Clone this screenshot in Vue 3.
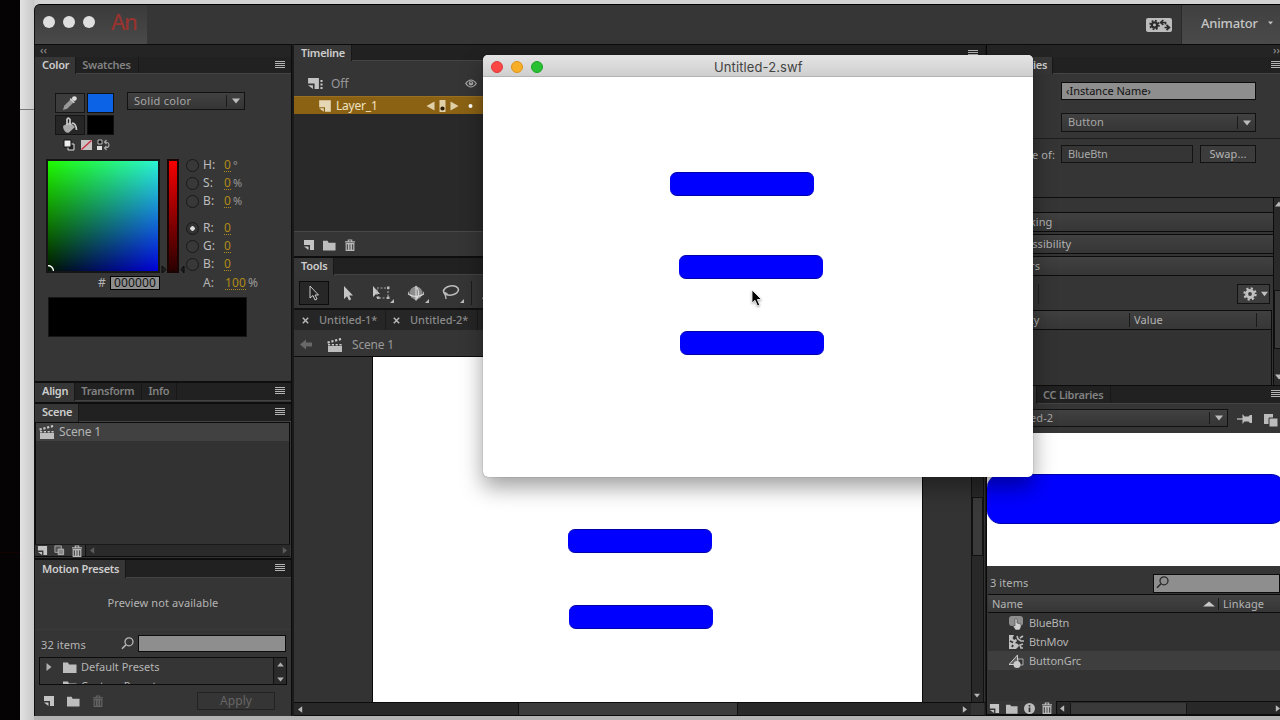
<template>
  <div class="desktop">
    <svg class="defs" width="0" height="0">
      <symbol id="burger" viewBox="0 0 10 8"><path d="M0 .5h10M0 2.5h10M0 4.5h10M0 6.5h10" stroke="#b4b4b4" stroke-width="1" /></symbol>
      <symbol id="page" viewBox="0 0 12 12"><path d="M1 1h10v10H7V6H1z" fill="#c4c4c4" /><path d="M1 7.5h4.5V11z" fill="#c4c4c4" /></symbol>
      <symbol id="folder" viewBox="0 0 14 12"><path d="M0 1.5h5l1 2h7.5V12H0z" fill="#bdbdbd" /></symbol>
      <symbol id="trash" viewBox="0 0 12 12"><path d="M1 2.8h10M4.3 2.5V1h3.4v1.5M2.2 4.6h7.6v6.7H2.2zM4.4 5v6M6 5v6M7.6 5v6" fill="none" stroke="#b8b8b8" stroke-width="1.2" /></symbol>
      <symbol id="copy" viewBox="0 0 12 12"><path d="M1 1h7v7H1z" fill="#555" stroke="#aaa" /><path d="M4.5 4.5h6v6h-6z" fill="#8a8a8a" stroke="#bbb" /></symbol>
      <symbol id="clap" viewBox="0 0 16 14"><path d="M1 8h14v6H1z" fill="#bdbdbd" /><path d="M1 6.8h14" stroke="#c8c8c8" stroke-width="1.6" stroke-dasharray="2.2 1.6" /><path d="M.6 4.6L14 1" stroke="#c8c8c8" stroke-width="2.2" stroke-dasharray="2.2 1.7" /></symbol>
      <symbol id="glass" viewBox="0 0 13 13"><circle cx="8" cy="4.8" r="4" fill="none" stroke="currentColor" stroke-width="1.3" /><path d="M5 7.8L1 11.8" stroke="currentColor" stroke-width="1.6" /></symbol>
      <symbol id="left" viewBox="0 0 6 8"><path d="M5 0v8L0 4z" fill="currentColor" /></symbol>
      <symbol id="right" viewBox="0 0 6 8"><path d="M1 0v8l5-4z" fill="currentColor" /></symbol>
      <symbol id="down" viewBox="0 0 8 6"><path d="M0 .5h8L4 5.5z" fill="currentColor" /></symbol>
      <symbol id="up" viewBox="0 0 8 6"><path d="M0 5.5h8L4 .5z" fill="currentColor" /></symbol>
      <symbol id="gear" viewBox="0 0 14 14"><circle cx="7" cy="7" r="3.4" fill="none" stroke="currentColor" stroke-width="3" /><circle cx="7" cy="7" r="5.6" fill="none" stroke="currentColor" stroke-width="2.2" stroke-dasharray="2.2 2.2" /></symbol>
    </svg>

    <div class="app">
      <header class="top">
        <div class="brand">
          <i v-for="n in 3" :key="n" class="light"></i>
          <span class="logo">An</span>
        </div>
        <svg class="sync" width="26" height="14" viewBox="0 0 26 14">
          <rect width="26" height="14" rx="2" fill="#bcbcbc" />
          <g color="#2c2c2c"><use href="#gear" x="3" y="1.5" width="11" height="11" /></g>
          <path d="M15 4.5h4.5v2M17.3 2L14.6 4.5l2.7 2.4M23 9.5h-4.5M20.5 7l2.900 2.500-2.900 2.500" fill="none" stroke="#2c2c2c" stroke-width="1.7" />
        </svg>
        <div class="workspace">
          <span>Animator</span>
          <svg width="6" height="4" color="#c0c0c0"><use href="#down" width="5" height="4" /></svg>
        </div>
      </header>

      <main class="body">
        <section class="left">
          <div class="strip">‹‹</div>
          <div class="tabs">
            <b class="tab on">Color</b><b class="tab">Swatches</b>
            <svg class="burger" width="10" height="8"><use href="#burger" /></svg>
          </div>
          <div class="color">
            <div class="fills">
              <div class="swatches">
                <div class="tool-btn">
                  <svg width="18" height="18" viewBox="0 0 18 18"><path d="M2 16l1.2-4.2L10 5l3 3-6.8 6.800z" fill="#999" /><path d="M9.2 4.6l4.2 4.200" stroke="#ccc" stroke-width="1.5" /><circle cx="13.4" cy="4.600" r="2.400" fill="#ddd" /></svg>
                </div>
                <div class="swatch blue"></div>
                <div class="tool-btn dark">
                  <svg width="18" height="18" viewBox="0 0 18 18"><path d="M2 10l7-4 5 5-6 5.5q-2 1-4-1t-2-5.500z" fill="#aaa" /><path d="M6 9V3.5q1-2.800 3 0V9M11 7q4 0 4.500 7" fill="none" stroke="#ccc" stroke-width="1.7" /></svg>
                </div>
                <div class="swatch"></div>
              </div>
              <svg class="minis" width="50" height="12" viewBox="0 0 50 12">
                <path d="M5 5h6v6H5z" fill="#222" stroke="#e0e0e0" /><path d="M1 1h7v7H1z" fill="#eee" stroke="#111" />
                <path d="M18 1h11v10H18z" fill="#c9c4c4" /><path d="M18.5 10.500l10-9" stroke="#c83040" stroke-width="1.5" />
                <path d="M35 1h4v4h-4z" fill="#111" stroke="#bbb" /><path d="M34 7h5v4h-5z" fill="#e0e0e0" />
                <path d="M41.5 3q4.500 0 4.500 3t-4.500 3M43.500 1l-2 2 2 2M43.500 7l-2 2 2 2" fill="none" stroke="#aaa" stroke-width="1.2" />
              </svg>
            </div>
            <div class="select type"><span>Solid color</span><em><svg width="8" height="6"><use href="#down" /></svg></em></div>
            <div class="picker">
              <div class="spectrum">
                <svg width="6" height="6" viewBox="0 0 6 6"><path d="M0 .5q5 .5 5.500 5.500" fill="none" stroke="#fff" stroke-width="1.3" /></svg>
              </div>
              <div class="hue">
                <svg width="24" height="9" viewBox="0 0 24 9"><path d="M1 1v7l4-3.500zM23 1v7l-3-3.500z" fill="#222" stroke="#0a0a0a" /></svg>
              </div>
              <ul class="channels">
                <li v-for="(c, i) in channels" :key="i" :class="{ gap: i === 3 }">
                  <i class="radio" :class="{ checked: i === 3 }"></i>
                  <span class="lab">{{ c.label }}</span><u>0</u><span class="unit">{{ c.unit }}</span>
                </li>
              </ul>
            </div>
            <div class="hexrow">
              <span class="hash">#</span><span class="hex">000000</span>
              <span class="alpha">A:</span><u>100</u><span class="unit">%</span>
            </div>
            <div class="preview"></div>
          </div>

          <div class="tabs align">
            <b class="tab on">Align</b><b class="tab">Transform</b><b class="tab">Info</b>
            <svg class="burger" width="10" height="8"><use href="#burger" /></svg>
          </div>
          <div class="tabs scene">
            <b class="tab on">Scene</b>
            <svg class="burger" width="10" height="8"><use href="#burger" /></svg>
          </div>
          <div class="scene-list">
            <div class="scene-row"><svg width="16" height="14"><use href="#clap" /></svg>Scene 1</div>
          </div>
          <div class="scene-foot">
            <svg width="11" height="11"><use href="#page" /></svg>
            <svg width="11" height="11"><use href="#copy" /></svg>
            <svg width="12" height="12"><use href="#trash" /></svg>
            <div class="hbar"><svg width="5" height="7"><use href="#left" /></svg><svg width="5" height="7"><use href="#right" /></svg></div>
          </div>
          <div class="tabs motion">
            <b class="tab on">Motion Presets</b>
            <svg class="burger" width="10" height="8"><use href="#burger" /></svg>
          </div>
          <div class="presets">
            <p class="noprev">Preview not available</p>
            <div class="find"><span>32 items</span><svg width="13" height="13"><use href="#glass" /></svg><div class="field"></div></div>
            <div class="tree">
              <div class="tree-rows">
                <div class="tree-row"><svg class="arr" width="7" height="8"><use href="#right" /></svg><svg width="14" height="12"><use href="#folder" /></svg>Default Presets</div>
                <div class="tree-row"><svg class="arr" width="7" height="8"></svg><svg width="14" height="12"><use href="#folder" /></svg>Custom Presets</div>
              </div>
              <div class="tree-bar"><svg width="7" height="5"><use href="#up" /></svg><svg width="7" height="5"><use href="#down" /></svg></div>
            </div>
            <div class="preset-foot">
              <svg width="12" height="12"><use href="#page" /></svg>
              <svg width="13" height="12"><use href="#folder" /></svg>
              <svg class="off" width="12" height="12"><use href="#trash" /></svg>
              <div class="apply">Apply</div>
            </div>
          </div>
        </section>

        <section class="center">
          <div class="tabs timeline">
            <b class="tab on">Timeline</b>
            <svg class="burger" width="10" height="8"><use href="#burger" /></svg>
          </div>
          <div class="layer-head">
            <svg width="16" height="13" viewBox="0 0 16 13"><use href="#page" width="13" height="13" /><path d="M14.5 3v10" stroke="#ccc" stroke-width="2" stroke-dasharray="2 1.5" /></svg>
            <span>Off</span>
            <svg class="eye" width="12" height="9" viewBox="0 0 12 9"><path d="M.7 4.5q5.300-7 10.600 0-5.300 7-10.600 0z" fill="none" stroke="#aaa" stroke-width="1.2" /><circle cx="6" cy="4.3" r="2.2" fill="#aaa" /><circle cx="6" cy="3.6" r=".8" fill="#333" /></svg>
          </div>
          <div class="layer">
            <svg class="lp" width="14" height="14" viewBox="0 0 12 12"><path d="M1 1h10v10H6V7H1z" fill="#e6d7b4" /><path d="M1 8h4v3z" fill="#e6d7b4" /></svg>
            <span>Layer_1</span>
            <svg class="keys" width="46" height="14" viewBox="0 0 46 14"><path d="M8 2.5v9L0 7zM24 2.5v9L32 7z" fill="#e0d0a8" /><path d="M13 1h6v12h-6z" fill="#e0d0a8" /><circle cx="16" cy="9.5" r="2.1" fill="#2a1c08" /><circle cx="44" cy="7" r="2" fill="#fff" /></svg>
          </div>
          <div class="frames"></div>
          <div class="layer-foot">
            <svg width="12" height="12"><use href="#page" /></svg>
            <svg width="13" height="12"><use href="#folder" /></svg>
            <svg width="12" height="12"><use href="#trash" /></svg>
          </div>
          <div class="tabs tools-tab"><b class="tab on">Tools</b></div>
          <div class="tools">
            <div class="tool active"><svg width="14" height="18" viewBox="0 0 14 18"><path d="M3 2v12l3-2.500L8 16l2-1-2-4h3.500z" fill="#222" stroke="#ccc" /></svg></div>
            <div class="tool"><svg width="14" height="18" viewBox="0 0 14 18"><path d="M3 2v13l3-2.700L8 16.500l2.200-1.200L8.200 11.500H12z" fill="#c6c6c6" /></svg></div>
            <div class="tool"><svg width="24" height="20" viewBox="0 0 24 20"><path d="M2 3v11l3-3h4z" fill="#c6c6c6" /><path d="M6 5h11v10H6z" fill="none" stroke="#aaa" stroke-dasharray="2 1.5" /><path d="M16 3.5h2.500V6H16zM16 13.500h2.500V16H16zM6 13.500h2.500V16H6z" fill="#bbb" /><path d="M23 16v4h-4z" fill="#bbb" /></svg></div>
            <div class="tool"><svg width="24" height="20" viewBox="0 0 24 20"><circle cx="11" cy="10" r="6.5" fill="#8c8c8c" /><path d="M11 3v14M3 11q8 5 16 0M11 3q5.500 7 0 14" fill="none" stroke="#ddd" stroke-width="1.1" /><path d="M11 2.500l2 2.500H9zM11 18l2-2.500H9zM3 8v4h2zM19 8v4h-2z" fill="#bbb" /><path d="M24 16v4h-4z" fill="#bbb" /></svg></div>
            <div class="tool"><svg width="24" height="20" viewBox="0 0 24 20"><ellipse cx="11" cy="7.5" rx="7.5" ry="4.6" fill="none" stroke="#bbb" stroke-width="1.6" transform="rotate(-8 11 7.5)" /><path d="M4 10q1 2 2.500 1.500t-.5-1.500-1 1.500 1 4.500" fill="none" stroke="#bbb" stroke-width="1.3" /><path d="M24 16v4h-4z" fill="#bbb" /></svg></div>
            <svg class="pen" width="8" height="24" viewBox="0 0 8 24"><path d="M.5 0v24" stroke="#1c1c1c" /></svg>
            <svg width="6" height="20" viewBox="0 0 6 20"><path d="M6 5v11H1z" fill="#aaa" /></svg>
          </div>
          <div class="docs">
            <div v-for="d in docs" :key="d" class="doc">
              <svg width="7" height="7" viewBox="0 0 7 7"><path d="M.8.8l5.400 5.400M6.200.8L.8 6.200" stroke="#b8b8b8" stroke-width="1.5" /></svg>{{ d }}
            </div>
          </div>
          <div class="crumb">
            <svg width="13" height="11" viewBox="0 0 13 11"><path d="M0 5.500L6 .5v3h6v4H6v3z" fill="#686868" /></svg>
            <svg width="16" height="14"><use href="#clap" /></svg>
            <span>Scene 1</span>
          </div>
          <div class="work">
            <div class="stage">
              <div class="shape s1"></div>
              <div class="shape s2"></div>
            </div>
            <div class="vbar"><i></i><svg width="6" height="5"><use href="#down" /></svg></div>
          </div>
          <div class="bottom-bar">
            <svg width="5" height="7"><use href="#left" /></svg>
            <i></i>
            <svg width="5" height="7"><use href="#right" /></svg>
            <span class="corner"></span>
          </div>
        </section>

        <section class="right">
          <div class="strip end">››</div>
          <div class="tabs props">
            <b class="tab on">Properties</b>
            <svg class="burger" width="10" height="8"><use href="#burger" /></svg>
          </div>
          <div class="form">
            <div class="frow"><div class="field name">‹Instance Name›</div></div>
            <div class="frow two"><div class="select kind"><span>Button</span><em><svg width="8" height="6"><use href="#down" /></svg></em></div></div>
            <div class="frow three"><label>Instance of:</label><div class="inst">BlueBtn</div><div class="swap">Swap...</div></div>
          </div>
          <div class="scrolly">
            <div class="groups">
              <div class="g0"></div>
              <div v-for="g in groups" :key="g" class="group">{{ g }}</div>
              <div class="filter-tools"><i></i><div class="gearbtn"><svg width="14" height="14"><use href="#gear" /></svg><svg width="7" height="6"><use href="#down" /></svg></div></div>
              <div class="table"><div class="thead"><span>Property</span><span class="val">Value</span></div></div>
            </div>
            <div class="pbar"><svg width="8" height="6"><use href="#up" /></svg><i></i><svg class="dn" width="8" height="6"><use href="#down" /></svg></div>
          </div>
          <div class="tabs lib">
            <b class="tab on">Library</b><b class="tab">CC Libraries</b>
            <svg class="burger" width="10" height="8"><use href="#burger" /></svg>
          </div>
          <div class="lib-doc">
            <div class="select doc-sel"><span>Untitled-2</span><em><svg width="8" height="6"><use href="#down" /></svg></em></div>
            <svg width="15" height="10" viewBox="0 0 15 10"><path d="M0 5h6" stroke="#bbb" stroke-width="1.3" /><path d="M5.500 0v10l2-2.500h4l1.500 1.500H15V1h-2l-1.500 1.500h-4z" fill="#bdbdbd" /></svg>
            <svg width="15" height="14" viewBox="0 0 15 14"><path d="M0 0h9v10H0z" fill="#bbb" /><path d="M5 4h9v9H5z" fill="#bbb" stroke="#333" /></svg>
          </div>
          <div class="lib-view"><div class="big"></div></div>
          <div class="lib-find"><span>3 items</span><div class="field"><svg width="13" height="13"><use href="#glass" /></svg></div></div>
          <div class="lib-head"><span>Name</span><svg width="12" height="6" viewBox="0 0 8 6" preserveAspectRatio="none"><path d="M0 5.500h8L4 .5z" fill="#c8c8c8" /></svg><span class="link">Linkage</span></div>
          <div class="lib-items">
            <div class="item">
              <svg width="15" height="14" viewBox="0 0 15 14"><rect width="14" height="10" rx="3" fill="#8e8e8e" /><path d="M6 3q1-1.500 2 0v4l4 1v3l-1.500 3h-4L4 10q1-1.500 2 0z" fill="#d0d0d0" stroke="#444" stroke-width=".6" /></svg>BlueBtn
            </div>
            <div class="item">
              <svg width="15" height="14" viewBox="0 0 15 14"><path d="M0 0h5L3.500 3 5 5l2-1 1 2-2 2 3 1 1 2-3 3H0z" fill="#c0c0c0" /><path d="M1 6l3 1.500M4 10l-1 2" stroke="#333" stroke-width="1.8" /><path d="M8 1l1 3 3 2h3M14 1l-3 2M14 9l-3 1 1 3h2" fill="none" stroke="#b8b8b8" stroke-width="1.700" /></svg>BtnMov
            </div>
            <div class="item sel">
              <svg width="15" height="14" viewBox="0 0 15 14"><path d="M0 10.500L8.500 1v9.500z" fill="#666" stroke="#ccc" /><path d="M9 5h5v6H9z" fill="#333" stroke="#aaa" /><circle cx="8" cy="10.5" r="3.5" fill="#ccc" /></svg>ButtonGrc
            </div>
          </div>
          <div class="lib-foot">
            <svg width="11" height="11"><use href="#page" /></svg>
            <svg width="12" height="11"><use href="#folder" /></svg>
            <svg width="11" height="11" viewBox="0 0 11 11"><circle cx="5.5" cy="5.5" r="5.5" fill="#bbb" /><path d="M5.500 2v1.600M5.500 4.600V9" stroke="#333" stroke-width="1.7" /></svg>
            <svg width="12" height="12"><use href="#trash" /></svg>
            <div class="lbar"><svg width="5" height="7"><use href="#left" /></svg><i></i><svg width="5" height="7"><use href="#right" /></svg></div>
          </div>
        </section>
      </main>
    </div>

    <!-- player window floating over the workspace -->
    <div class="player">
      <div class="title"><i class="r"></i><i class="y"></i><i class="g"></i><span>Untitled-2.swf</span></div>
      <div class="shape p1"></div>
      <div class="shape p2"></div>
      <div class="shape p3"></div>
      <svg class="cursor" width="13" height="19" viewBox="0 0 13 19"><path d="M1 1v13l3-2.700L6.500 17l2.200-1L6.300 10.500H10.500z" fill="#000" stroke="#fff" stroke-width=".8" /></svg>
    </div>
  </div>
</template>

<script setup>
const channels = [
  { label: 'H:', unit: '°' },
  { label: 'S:', unit: '%' },
  { label: 'B:', unit: '%' },
  { label: 'R:', unit: '' },
  { label: 'G:', unit: '' },
  { label: 'B:', unit: '' }
]

const docs = ['Untitled-1*', 'Untitled-2*']

const groups = ['Tracking', 'Accessibility', 'Filters']
</script>

<style>
body {
  overflow: hidden;
  background: #000;
}
</style>

<style scoped>
* { box-sizing: border-box; }
i, em, u { font-style: normal; text-decoration: none; }
svg { display: block; flex: none; }
p, ul { margin: 0; padding: 0; list-style: none; }

.desktop {
  position: relative;
  width: 1280px;
  height: 720px;
  overflow: hidden;
  padding: 4px 0 4px 34px;
  background:
    linear-gradient(#120202, #120202) 0 552px / 20px 1px no-repeat,
    linear-gradient(#777, #777) 20px 109px / 14px 1px no-repeat,
    linear-gradient(#050303, #050303) 0 0 / 20px 720px no-repeat,
    linear-gradient(#b3b3b3, #b3b3b3) 34px 716px / 1246px 4px no-repeat,
    linear-gradient(90deg, #e2e2e2 20px, #c8c8c8 34px, #d2d2d2 35px);
  font-family: "Noto Sans", "Open Sans", sans-serif;
  font-size: 11px;
  line-height: 14px;
  letter-spacing: 0.1px;
  color: #b4b4b4;
}
.defs { position: absolute; }

.app {
  height: 712px;
  display: flex;
  flex-direction: column;
  background: #1a1a1a;
  border-radius: 6px 0 0 0;
  border-top: 1px solid #000;
  border-left: 1px solid #111;
  overflow: hidden;
}
.top {
  flex: none;
  height: 39px;
  display: flex;
  align-items: center;
  background: #363636;
}
.brand {
  width: 112px;
  height: 39px;
  display: flex;
  align-items: center;
  gap: 8px;
  padding: 0 0 5px 8px;
  background: linear-gradient(#3a3a3a, #4a4a4a);
}
.light { width: 12px; height: 12px; border-radius: 50%; background: #dedede; }
.logo {
  margin: -2px 0 0 8px;
  font: 500 22px/26px "Noto Sans", sans-serif;
  letter-spacing: -1.5px;
  color: #963430;
}
.sync { margin-left: auto; margin-right: 9px; }
.workspace {
  width: 99px;
  height: 39px;
  display: flex;
  align-items: center;
  gap: 10px;
  padding: 0 0 3px 19px;
  background: linear-gradient(#404040, #4a4a4a);
  font-size: 13px;
  font-weight: 500;
  letter-spacing: -0.2px;
  color: #c6c6c6;
  border-left: 1px solid #2a2a2a;
}

.body { flex: 1; display: flex; min-height: 0; }
.left, .center, .right { display: flex; flex-direction: column; border-top: 1px solid #0c0c0c; }
.left { width: 257px; border-right: 1px solid #0c0c0c; background: #353535; }
.center { width: 691px; margin-left: 2px; background: #353535; }
.right { width: 294px; margin-left: 1px; border-left: 1px solid #0a0a0a; background: #353535; }

.strip {
  flex: none;
  height: 12px;
  padding-left: 5px;
  line-height: 10px;
  color: #999;
  background: #242424;
}
.strip.end { text-align: right; padding-right: 0; }

.tabs {
  flex: none;
  display: flex;
  height: 17px;
  background: #212121;
  border-bottom: 1px solid #444;
  align-items: stretch;
}
.tab {
  padding: 0 7px 0 6px;
  line-height: 16px;
  font-weight: 600;
  letter-spacing: -0.25px;
  color: #828282;
  border-right: 1px solid #181818;
}
.tab.on { padding: 0 6px 0 7px; color: #cecece; background: #363636; margin-bottom: -1px; }
.burger { margin: 4px 6px 0 auto; }

.color {
  flex: none;
  height: 306px;
  padding: 18px 0 0 11px;
  display: grid;
  grid-template-columns: 81px 1fr;
  grid-template-rows: 66px 117px 18px 1fr;
  background: #363636;
}
.swatches {
  display: grid;
  grid-template-columns: 30px 27px;
  grid-auto-rows: 20px;
  gap: 2px;
  padding: 1px 0 0 9px;
}
.tool-btn {
  display: grid;
  place-items: center;
  background: #3c3c3c;
  border: 1px solid #151515;
}
.tool-btn.dark { background: #262626; }
.swatch { background: #000; border: 1px solid #111; }
.swatch.blue { background: #0d63e6; }
.minis { margin: 4px 0 0 17px; }
.select {
  display: flex;
  justify-content: space-between;
  background: linear-gradient(#414141, #353535);
  border: 1px solid #121212;
  padding-left: 6px;
  line-height: 16px;
  color: #a8a8a8;
}
.select em {
  width: 18px;
  margin: 2px 0;
  border-left: 1px solid #1b1b1b;
  display: grid;
  place-items: center;
  color: #bcbcbc;
}
.type { width: 118px; height: 18px; letter-spacing: 0.3px; }
.picker { grid-column: 1 / 3; display: flex; padding-top: 1px; }
.spectrum {
  width: 114px;
  height: 114px;
  border: 2px solid #151515;
  display: flex;
  align-items: flex-end;
  background: linear-gradient(90deg, #20fa00, #2cf4d4);
  position: relative;
}
.spectrum::before {
  content: "";
  position: absolute;
  inset: 0;
  background: linear-gradient(90deg, #001500, #0000d8);
  -webkit-mask-image: linear-gradient(transparent, #000);
  mask-image: linear-gradient(transparent, #000);
}
.spectrum svg { position: relative; }
.hue {
  width: 12px;
  height: 114px;
  margin-left: 7px;
  border: 2px solid #1a0505;
  background: linear-gradient(#f60000, #2a0000);
  position: relative;
}
.hue svg { position: absolute; left: -8px; bottom: -3px; }
.channels { margin: -3px 0 0 6px; }
.channels li { height: 18px; display: flex; align-items: center; color: #bcbcbc; }
.channels li.gap { margin-top: 9px; }
.radio { width: 13px; height: 13px; border-radius: 50%; border: 1.5px solid #191919; background: #383838; margin-left: 1px; }
.radio.checked { background: radial-gradient(#ddd 0 2px, #333 2.5px); }
.lab { width: 25px; padding-left: 4px; font-size: 12px; }
u { color: #b18b18; border-bottom: 1px dotted #b18b18; line-height: 13px; font-size: 12px; }
.unit { margin-left: 2px; color: #999; }
.hexrow { grid-column: 1 / 3; display: flex; align-items: center; height: 15px; font-size: 12px; padding-left: 52px; }
.hash { width: 12px; }
.hex {
  width: 50px;
  height: 14px;
  line-height: 12px;
  background: #8e8e8e;
  border: 1px solid #000;
  color: #111;
  text-align: center;
  font-size: 12px;
}
.alpha { margin-left: 43px; width: 22px; }
.preview { width: 199px; height: 40px; background: #000; border: 1px solid #161616; margin-left: 2px; grid-column: 1 / 3; margin-top: 4px; }

.align { margin-top: 3px; height: 18px; box-shadow: 0 -2px #0e0e0e; }
.scene { margin-top: 3px; height: 18px; box-shadow: 0 -2px #0e0e0e; }
.scene-list { flex: none; height: 123px; margin: 0 1px 0 0; border: 1px solid #0c0c0c; border-bottom-color: #1a1a1a; background: #323232; }
.scene-row { height: 18px; display: flex; align-items: center; gap: 4px; padding-left: 3px; background: #414141; font-size: 12px; letter-spacing: -0.2px; }
.scene-foot { flex: none; height: 12px; margin: 0 1px 0 0; padding-left: 2px; display: flex; gap: 6px; align-items: center; border-bottom: 1px solid #0c0c0c; }
.hbar { flex: 1; height: 11px; display: flex; align-items: center; justify-content: space-between; padding: 0 3px 0 4px; background: #2a2a2a; border-left: 1px solid #111; color: #5c5c5c; margin-left: -4px; }
.motion { margin-top: 3px; height: 18px; box-shadow: 0 -2px #0e0e0e; }
.motion .tab { line-height: 17px; }
.presets { flex: 1; display: flex; flex-direction: column; }
.noprev { height: 52px; padding-top: 18px; text-align: center; border-bottom: 1px solid #3a3a3a; }
.find { display: flex; height: 27px; align-items: center; padding-left: 6px; }
.find span { width: 80px; padding-top: 2px; }
.field { background: #8e8e8e; border: 1px solid #0c0c0c; }
.find .field { width: 148px; height: 17px; margin-left: 4px; }
.find svg { color: #b8b8b8; }
.tree { margin: 0 4px; height: 28px; border: 1px solid #0c0c0c; display: flex; }
.tree-rows { flex: 1; overflow: hidden; letter-spacing: 0; }
.tree-row { height: 19px; display: flex; align-items: center; gap: 6px; padding: 0 0 2px 5px; }
.arr { margin-right: 3px; color: #b0b0b0; }
.tree-row svg:nth-child(2) { margin-left: 2px; margin-right: -2px; }
.tree-bar { width: 13px; border-left: 1px solid #111; background: #2a2a2a; display: flex; flex-direction: column; justify-content: space-between; align-items: center; padding: 4px 0 2px; color: #b0b0b0; }
.preset-foot { display: flex; align-items: center; height: 31px; padding: 1px 0 0 8px; }
.preset-foot svg { margin-right: 12px; }
.preset-foot .off { opacity: 0.35; }
.apply { width: 78px; height: 18px; margin-left: 81px; border: 1px solid #232323; text-align: center; line-height: 16px; font-size: 12px; color: #666; }

/* timeline, tools and the stage */
.timeline { height: 16px; }
.timeline .burger { margin: 5px 7px 0 auto; }
.layer-head { flex: none; height: 35px; display: flex; align-items: center; padding: 10px 0 0 13px; color: #999; font-size: 12px; letter-spacing: 0; }
.layer-head span { margin-left: 8px; width: 134px; }
.layer { flex: none; height: 18px; display: flex; align-items: center; padding-left: 24px; background: #8b6214; border-top: 1px solid #9a7020; color: #f0e2c0; }
.layer span { margin-left: 4px; width: 90px; font-size: 12px; letter-spacing: -0.2px; }
.layer .keys { width: 47px; }
.frames { flex: none; height: 118px; background: #292929; border-bottom: 1px solid #484848; }
.layer-foot { flex: none; height: 24px; display: flex; gap: 8px; padding: 7px 0 0 9px; }
.tools-tab { margin-top: 2px; box-shadow: 0 -2px #0e0e0e; }
.tools { flex: none; height: 33px; display: flex; align-items: center; padding: 3px 0 0 5px; gap: 4.4px; }
.tool { width: 30px; height: 24px; display: grid; place-items: center; }
.tool.active { background: #272727; border: 1px solid #0c0c0c; }
.pen { margin: 0 -2px 0 0; }
.docs { flex: none; height: 22px; display: flex; background: #262626; border-top: 2px solid #111; }
.doc { width: 92px; display: flex; align-items: center; gap: 10px; padding-left: 8px; border-right: 1px solid #1b1b1b; color: #8a8a8a; font-weight: 500; letter-spacing: 0; }
.doc + .doc { padding-left: 7px; }
.crumb { flex: none; height: 27px; display: flex; align-items: center; padding: 3px 0 0 6px; border-bottom: 1px solid #0c0c0c; font-size: 12px; letter-spacing: -0.2px; color: #999; }
.crumb svg:nth-child(2) { margin-left: 14px; }
.crumb span { margin-left: 9px; }
.work { flex: 1; display: flex; min-height: 0; background: #333; }
.stage { position: relative; width: 551px; margin-left: 78px; background: #fff; border: solid #0a0a0a; border-width: 0 1px; }
.shape { position: absolute; width: 144px; height: 24px; border-radius: 7px; background: #00f; border: solid #0000a8; border-width: 1px 0; }
.s1 { left: 195px; top: 172px; }
.s2 { left: 196px; top: 248px; }
.vbar { width: 13px; margin-left: auto; margin-right: 1px; background: #282828; border: solid #111; border-width: 0 1px; display: flex; flex-direction: column; color: #b8b8b8; }
.vbar i { height: 59px; margin-top: 140px; background: #3a3a3a; border: 1px solid #111; }
.vbar svg { margin: auto auto 4px 2px; }
.bottom-bar { flex: none; height: 14px; display: flex; align-items: center; padding-left: 4px; background: #282828; border: solid #0c0c0c; border-width: 1px 0; color: #b8b8b8; }
.bottom-bar i { width: 220px; height: 12px; margin: 0 auto 0 215px; background: #3c3c3c; border: solid #111; border-width: 0 1px; }
.corner { width: 13px; height: 12px; margin: 0 1px 0 4px; background: #333; }

/* properties + library */
.props .burger, .lib .burger { margin-right: -1px; }
.props .tab { width: 66px; }
.form { flex: none; height: 124px; padding-top: 8px; border-bottom: 1px solid #0e0e0e; }
.frow { display: flex; padding-left: 74px; align-items: flex-start; }
.name { width: 195px; height: 18px; padding-left: 4px; line-height: 15px; letter-spacing: 0; color: #111; }
.frow.two { margin-top: 13px; padding-bottom: 6px; border-bottom: 1px solid #1e1e1e; }
.kind { width: 195px; height: 19px; }
.frow.three { padding: 6px 0 0; }
label { width: 68px; text-align: right; line-height: 20px; margin-right: 6px; }
.inst { width: 132px; height: 18px; border: 1px solid #121212; padding-left: 6px; line-height: 16px; letter-spacing: -0.2px; color: #a8a8a8; }
.swap { width: 56px; height: 18px; margin-left: 7px; border: 1px solid #121212; background: #3c3c3c; text-align: center; line-height: 16px; }
.scrolly { flex: none; height: 187px; display: flex; }
.groups { width: 287px; }
.g0 { height: 14px; }
.group { height: 20px; margin-bottom: 2px; border: solid #0c0c0c; border-width: 1px 0; padding-left: 21px; line-height: 18px; background: linear-gradient(#414141, #363636); }
.filter-tools { height: 32px; display: flex; align-items: center; justify-content: space-between; padding-right: 3px; }
.filter-tools i { width: 1px; height: 20px; margin-left: 51px; background: #222; }
.gearbtn { width: 33px; height: 20px; display: flex; align-items: center; gap: 4px; padding-left: 5px; border: 1px solid #121212; background: #3d3d3d; color: #c0c0c0; }
.table { height: 75px; width: 285px; border: solid #0c0c0c; border-width: 1px 1px 0 0; background: #323232; }
.thead { height: 19px; display: flex; line-height: 18px; background: linear-gradient(#404040, #363636); border-bottom: 1px solid #0c0c0c; }
.thead span:first-child { width: 142px; padding-left: 7px; }
.val { width: 128px; border: solid #1a1a1a; border-width: 0 1px; padding-left: 4px; height: 14px; margin-top: 2px; line-height: 14px; }
.pbar { width: 7px; border-left: 1px solid #0c0c0c; background: #2a2a2a; overflow: hidden; color: #b8b8b8; display: flex; flex-direction: column; padding: 3px 0 5px; }
.pbar i { width: 10px; height: 59px; margin-top: 83px; background: #3a3a3a; border: 1px solid #111; }
.pbar .dn { margin-top: auto; }
.pbar svg { margin-left: 1px; }
.lib { height: 19px; border-top: 1px solid #0c0c0c; }
.lib .tab { line-height: 17px; }
.lib .tab:first-child { width: 50px; }
.lib-doc { flex: none; height: 29px; padding: 5px 0 0; display: flex; }
.doc-sel { flex: none; width: 241px; height: 18px; margin-right: 9px; padding-left: 13px; }
.lib-doc > svg { margin: 5px 12px 0 0; }
.lib-view { flex: none; height: 133px; background: #fff; overflow: hidden; padding-top: 41px; }
.big { width: 298px; height: 50px; border-radius: 14px; background: #00f; border: solid #0000b0; border-width: 1px 0; }
.lib-find { flex: none; height: 28px; display: flex; align-items: center; justify-content: space-between; padding: 6px 0 0 3px; }
.lib-find .field { width: 127px; height: 19px; padding: 1px 0 0 2px; color: #2a2a2a; }
.lib-head { flex: none; height: 19px; display: flex; align-items: center; padding: 1px 0 0 4px; border: solid #0c0c0c; border-width: 1px 0; background: linear-gradient(#424242, #363636); margin-left: 1px; }
.lib-head > span:first-child { width: 211px; letter-spacing: 0; }
.link { border-left: 1px solid #1a1a1a; margin-left: 3px; padding-left: 4px; line-height: 12px; }
.lib-items { flex: 1; margin-left: 1px; background: #323232; }
.item { height: 19px; display: flex; align-items: center; gap: 5px; padding-left: 21px; letter-spacing: -0.1px; }
.item.sel { background: #3e3e3e; }
.lib-foot { flex: none; height: 15px; display: flex; align-items: center; gap: 6px; padding-left: 2px; border-bottom: 2px solid #0c0c0c; }
.lib-foot > svg { margin-top: 1px; }
.lbar { flex: 1; height: 13px; display: flex; align-items: center; background: #282828; border: solid #0c0c0c; border-width: 1px 0 0 1px; color: #b8b8b8; margin-left: -3px; padding-left: 3px; }
.lbar i { flex: none; width: 117px; height: 11px; margin: 0 auto 0 5px; border: 1px solid #151515; border-width: 0 1px; background: #3a3a3a; }

.player {
  position: absolute;
  left: 483px;
  top: 55px;
  width: 550px;
  height: 422px;
  border-radius: 5px;
  background: #fff;
  box-shadow: 0 10px 22px rgba(0, 0, 0, 0.38), 0 0 1px rgba(0, 0, 0, 0.6);
}
.title {
  height: 22px;
  display: flex;
  align-items: center;
  gap: 8px;
  padding: 2px 0 0 8px;
  border-radius: 5px 5px 0 0;
  background: linear-gradient(#e4e4e4, #cfcfcf);
  border-bottom: 1px solid #b4b4b4;
}
.title i { width: 12px; height: 12px; border-radius: 50%; }
.r { background: #fb4646; border: 1px solid #dc3b3c; }
.y { background: #f9ae27; border: 1px solid #db941b; }
.g { background: #27c132; border: 1px solid #1ca327; }
.title span { margin-left: 163px; font: 13px/16px Inter, sans-serif; color: #444; }
.p1 { left: 187px; top: 117px; }
.p2 { left: 196px; top: 200px; }
.p3 { left: 197px; top: 276px; }
.cursor { position: absolute; left: 268px; top: 234px; filter: drop-shadow(0 1px 1px rgba(0, 0, 0, 0.35)); }
</style>
